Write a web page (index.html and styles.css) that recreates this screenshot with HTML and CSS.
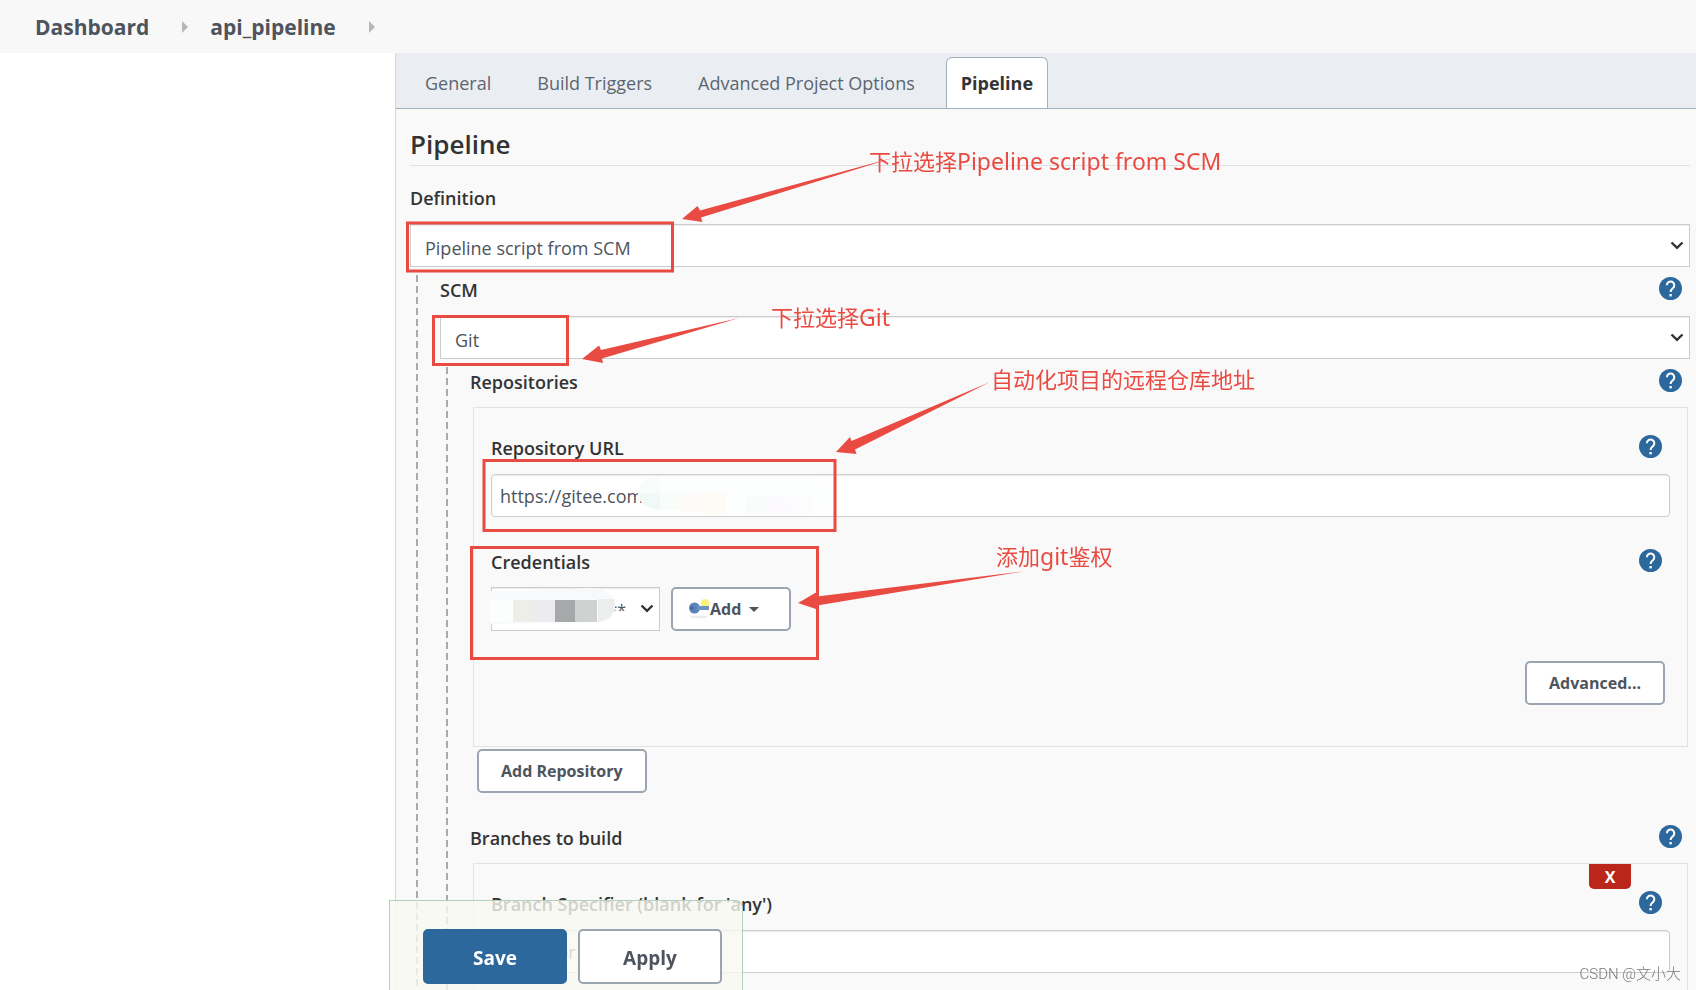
FILE: index.html
```
<!DOCTYPE html>
<html lang="en">
<head>
    <meta charset="UTF-8">
    <meta name="viewport" content="width=device-width, initial-scale=1.0">
    <title>api_pipeline Config [Jenkins]</title>
    <link rel="stylesheet" href="styles.css">
</head>
<body>
    <!-- Shared icons -->
    <svg class="sprite" width="0" height="0" aria-hidden="true">
        <symbol id="help" viewBox="0 0 23 23">
            <circle cx="11.5" cy="11.5" r="11.5" fill="#2c689c"/>
            <path d="M7.9 8.3a3.7 3.7 0 1 1 6.2 2.6c-1.500 1.300-2.500 2-2.500 4" fill="none" stroke="#fff" stroke-width="2"/>
            <rect x="10.400" y="17" width="2.400" height="2.400" fill="#fff"/>
        </symbol>
        <symbol id="chevron" viewBox="0 0 14 9">
            <path d="M1.500 1.500 7 6.800l5.500-5.300" fill="none" stroke="#333" stroke-width="2.400"/>
        </symbol>
        <symbol id="crumb-arrow" viewBox="0 0 6 12">
            <path d="M0 0 6 6 0 12z" fill="#b5b8ba"/>
        </symbol>
    </svg>

    <header class="breadcrumbs">
        <a href="#">Dashboard</a>
        <svg class="crumb-arrow"><use href="#crumb-arrow"/></svg>
        <a href="#">api_pipeline</a>
        <svg class="crumb-arrow"><use href="#crumb-arrow"/></svg>
    </header>

    <div class="page">
        <aside class="side-panel"></aside>
        <main class="main-panel">
            <nav class="tab-bar">
                <a class="tab" href="#general">General</a>
                <a class="tab" href="#triggers">Build Triggers</a>
                <a class="tab" href="#advanced">Advanced Project Options</a>
                <a class="tab active" href="#pipeline">Pipeline</a>
            </nav>

            <form class="config" id="config">
                <h2>Pipeline</h2>

                <div class="label-row">
                    <label for="definition">Definition</label>
                </div>
                <div class="select-wrap">
                    <select id="definition"><option>Pipeline script from SCM</option></select>
                    <svg class="chevron"><use href="#chevron"/></svg>
                </div>

                <div class="nested">
                    <div class="label-row">
                        <label for="scm">SCM</label>
                        <button type="button" class="help" aria-label="Help for SCM"><svg><use href="#help"/></svg></button>
                    </div>
                    <div class="select-wrap">
                        <select id="scm"><option>Git</option></select>
                        <svg class="chevron"><use href="#chevron"/></svg>
                    </div>

                    <div class="nested">
                        <div class="label-row">
                            <span>Repositories</span>
                            <button type="button" class="help" aria-label="Help for Repositories"><svg><use href="#help"/></svg></button>
                        </div>
                        <div class="box">
                            <div class="label-row">
                                <label for="url">Repository URL</label>
                                <button type="button" class="help" aria-label="Help for Repository URL"><svg><use href="#help"/></svg></button>
                            </div>
                            <div class="input-wrap">
                                <input type="text" id="url" value="https://gitee.com">
                                <svg class="url-mask" width="194" height="42" aria-hidden="true">
                                    <path d="M22 2H170Q192 8 192 22T174 40H70L40 36H22Q0 34 0 18T22 2z" fill="#fdfefe"/>
                                    <path d="M0 19H22V36Q3 34 0 19z" fill="#f1f9f8"/>
                                    <path d="M0 19Q2 3 22 2V19z" fill="#f8fcfb"/>
                                    <path d="M22 19h21v17H22z" fill="#f9fdf9"/>
                                    <path d="M43 19h22v19H43z" fill="#fdfaf8"/>
                                    <path d="M65 19h22v21H65z" fill="#fefbf5"/>
                                    <path d="M108 23h20v17h-20z" fill="#f9fdfa"/>
                                    <path d="M128 23h20v17h-20z" fill="#fdfafd"/>
                                    <path d="M148 23h26v17h-26z" fill="#fcfcff"/>
                                </svg>
                            </div>

                            <div class="label-row credentials-label">
                                <label for="credentials">Credentials</label>
                                <button type="button" class="help" aria-label="Help for Credentials"><svg><use href="#help"/></svg></button>
                            </div>
                            <div class="credentials-row">
                                <div class="select-wrap credentials">
                                    <select id="credentials"><option>**</option></select>
                                    <svg class="chevron"><use href="#chevron"/></svg>
                                    <svg class="cred-mask" width="125" height="37" aria-hidden="true">
                                        <path d="M0 4Q60 4 96 1Q124 0 125 18T106 35L0 37z" fill="#f7f9fa"/>
                                        <path d="M108 12h16.500Q126 33 108 35z" fill="#eceeee"/>
                                        <path d="M0 13h23v22H0z" fill="#fbfefd"/>
                                        <path d="M23 13h20v22H23z" fill="#eeede8"/>
                                        <path d="M43 13h22v22H43z" fill="#ebebf0"/>
                                        <path d="M65 13h20v22H65z" fill="#a5a9a9"/>
                                        <path d="M85 13h22v22H85z" fill="#d0d2d1"/>
                                    </svg>
                                </div>
                                <button type="button" class="btn add">
                                    <svg width="22" height="22" viewBox="0 0 22 22" aria-hidden="true">
                                        <ellipse cx="11" cy="19" rx="9" ry="1.500" fill="#ececec"/>
                                        <circle cx="17" cy="5" r="4" fill="#fbf27a"/>
                                        <circle cx="6.500" cy="10" r="5.500" fill="#5b82ba"/>
                                        <path d="M9 8h12v4H9z" fill="#6d92c4"/>
                                        <circle cx="4" cy="10" r="1.500" fill="#3f659f"/>
                                    </svg>
                                    <span>Add</span>
                                    <i class="caret"></i>
                                </button>
                            </div>
                            <div class="advanced-row">
                                <button type="button" class="btn">Advanced...</button>
                            </div>
                        </div>
                        <button type="button" class="btn add-repository">Add Repository</button>

                        <div class="label-row branches">
                            <span>Branches to build</span>
                            <button type="button" class="help" aria-label="Help for Branches to build"><svg><use href="#help"/></svg></button>
                        </div>
                        <div class="box">
                            <button type="button" class="delete">X</button>
                            <div class="label-row">
                                <label for="branch">Branch Specifier (blank for 'any')</label>
                                <button type="button" class="help" aria-label="Help for Branch Specifier"><svg><use href="#help"/></svg></button>
                            </div>
                            <div class="input-wrap">
                                <input type="text" id="branch" value="*/master">
                            </div>
                        </div>
                    </div>
                </div>
            </form>
        </main>
    </div>

    <!-- Sticky save bar -->
    <div class="save-bar">
        <button type="submit" form="config" class="btn primary">Save</button>
        <button type="button" class="btn">Apply</button>
    </div>

    <!-- Tutorial notes drawn over the form -->
    <svg class="notes" width="1696" height="990">
        <g fill="none" stroke="#e94b43" stroke-width="3">
            <rect x="407.500" y="223" width="265" height="48"/>
            <rect x="433.500" y="316.500" width="134" height="48"/>
            <rect x="484" y="460.500" width="351" height="70"/>
            <rect x="471.500" y="547.500" width="346" height="111"/>
        </g>
        <g fill="#e94b43">
            <path d="M682 219 697.500 206 700 210.500 896 157 701 217.500 702.500 222z"/>
            <path d="M582 359 599 345.500 601 350 739 318 602 358.500 603 363z"/>
            <path d="M836 452 850 437 851.500 441 990 382 855 449.500 856.500 454z"/>
            <path d="M798 603 816 592.500 817 596.500 1023 571.500 817 605.500 816 609z"/>
        </g>
        <g class="note-text">
            <text x="869" y="170">下拉选择<tspan class="latin">Pipeline script from SCM</tspan></text>
            <text x="771" y="326">下拉选择<tspan class="latin">Git</tspan></text>
            <text x="991" y="388">自动化项目的远程仓库地址</text>
            <text x="996" y="565">添加<tspan class="latin">git</tspan>鉴权</text>
        </g>
    </svg>
    <div class="watermark">CSDN @文小大</div>
</body>
</html>
```
FILE: styles.css
```
/* General Styles */
* {
    box-sizing: border-box;
}

body {
    margin: 0;
    height: 100vh;
    overflow: hidden;
    font-family: "Open Sans", "Noto Sans", "Noto Sans CJK SC", sans-serif;
    font-size: 18px;
    color: #333;
    background-color: #fff;
}

button, input, select {
    font-family: inherit;
}

.sprite {
    position: absolute;
}

/* Breadcrumbs */
.breadcrumbs {
    display: flex;
    align-items: center;
    height: 53px;
    padding: 0 35px;
    background-color: #f8f8f8;
}

.breadcrumbs a {
    font-size: 21px;
    font-weight: 700;
    line-height: 28px;
    color: #4d545d;
    text-decoration: none;
}

.crumb-arrow {
    width: 6px;
    height: 12px;
    margin: 0 22px 0 33px;
}

/* Page layout */
.page {
    display: grid;
    grid-template-columns: 395px 1fr;
}

.main-panel {
    border-left: 1px solid #d5d7d9;
    background-color: #f9f9f9;
    min-width: 0;
}

/* Tabs */
.tab-bar {
    display: flex;
    align-items: flex-end;
    gap: 16px;
    height: 56px;
    padding-left: 14px;
    background-color: #eaeef2;
    border-bottom: 1px solid #a3afb9;
}

.tab {
    height: 51px;
    padding: 0 14px;
    border: 1px solid transparent;
    border-bottom: none;
    border-radius: 6px 6px 0 0;
    font-size: 18px;
    line-height: 50px;
    color: #5c6570;
    text-decoration: none;
}

.tab.active {
    border-color: #a3afb9;
    background-color: #fff;
    color: #333;
    font-weight: 700;
}

/* Form */
.config {
    padding: 17px 6px 40px 14px;
}

h2 {
    margin: 0 0 18px;
    padding-bottom: 3px;
    border-bottom: 1px solid #e0e0e0;
    font-size: 26px;
    font-weight: 600;
    line-height: 36px;
}

.label-row {
    display: flex;
    align-items: flex-start;
    justify-content: space-between;
    height: 28px;
    margin-bottom: 12px;
    font-size: 18px;
    font-weight: 600;
    line-height: 28px;
}

.help {
    width: 23px;
    height: 23px;
    margin: 1px 8px 0 0;
    padding: 0;
    border: none;
    background: none;
}

.help svg {
    display: block;
    width: 23px;
    height: 23px;
}

.select-wrap, .input-wrap {
    position: relative;
}

select, input {
    display: block;
    width: 100%;
    height: 43px;
    border: 1px solid #ccc;
    background-color: #fff;
    box-shadow: inset 0 1px 1px rgba(0, 0, 0, 0.08);
    font-size: 18px;
    color: #4d545d;
}

select {
    appearance: none;
    border-radius: 0;
    padding: 4px 14px 0;
}

input {
    border-radius: 4px;
    padding: 0 8px;
}

.chevron {
    position: absolute;
    right: 6px;
    top: 17px;
    width: 14px;
    height: 9px;
    pointer-events: none;
}

/* Indented groups with a dashed guide line */
.nested {
    margin: 8px 0 0 6px;
    padding: 1px 0 0 24px;
    background: repeating-linear-gradient(#aaa 0 7px, transparent 7px 11px) left top / 2px 100% no-repeat;
}

.box {
    position: relative;
    margin: 0 2px 0 3px;
    padding: 26px 17px 41px;
    border: 1px solid #e2e2e2;
}

.nested .nested > .label-row {
    margin-bottom: 11px;
}

.credentials-label {
    margin-top: 31px;
    margin-bottom: 11px;
}

.credentials-row {
    display: flex;
    gap: 11px;
}

.credentials {
    width: 169px;
}

.credentials select {
    height: 44px;
    padding: 2px 33px 0 0;
    font-size: 16px;
    text-align: right;
    text-align-last: right;
}

.url-mask, .cred-mask {
    position: absolute;
    left: 147px;
    top: 0;
    pointer-events: none;
}

.cred-mask {
    left: -1px;
}

.advanced-row {
    display: flex;
    justify-content: flex-end;
    padding: 30px 5px 0 0;
}

/* Buttons */
.btn {
    height: 44px;
    padding: 0 22px;
    border: 2px solid #9aa5af;
    border-radius: 5px;
    background-color: #fff;
    font-size: 16px;
    font-weight: 700;
    color: #4d545d;
}

.btn.add {
    display: flex;
    align-items: center;
    width: 120px;
    padding: 0 15px;
}

.caret {
    margin-left: 8px;
    border: 5px solid transparent;
    border-top-color: #4d545d;
    border-bottom: none;
}

.add-repository {
    display: block;
    margin: 2px 0 0 7px;
}

.branches {
    margin-top: 31px;
}

.delete {
    position: absolute;
    right: 56px;
    top: 0;
    width: 42px;
    height: 25px;
    padding: 0;
    border: none;
    border-radius: 0 0 5px 5px;
    background-color: #ba261a;
    color: #fff;
    font-size: 16px;
    font-weight: 700;
    line-height: 24px;
}

/* Save bar */
.save-bar {
    position: fixed;
    left: 389px;
    bottom: 0;
    display: flex;
    gap: 11px;
    padding: 28px 20px 6px 33px;
    border: 1px solid #b4cfc0;
    border-bottom: none;
    border-radius: 0 8px 0 0;
    background-color: rgba(247, 249, 240, 0.8);
}

.save-bar .btn {
    width: 144px;
    height: 55px;
    padding-top: 3px;
    font-size: 19px;
}

.save-bar .primary {
    border-color: #2c689c;
    background-color: #2c689c;
    color: #fff;
}

/* Notes */
.notes {
    position: absolute;
    left: 0;
    top: 0;
    pointer-events: none;
}

.note-text {
    font-family: "Noto Sans CJK SC", sans-serif;
    font-size: 22px;
    fill: #e94b43;
}

.latin {
    font-family: "Noto Sans", sans-serif;
    font-size: 23px;
}

.watermark {
    position: fixed;
    right: 15px;
    bottom: 4px;
    font-family: Roboto, "Noto Sans CJK SC", sans-serif;
    font-size: 15px;
    font-weight: 300;
    line-height: 24px;
    color: #777;
}
```
